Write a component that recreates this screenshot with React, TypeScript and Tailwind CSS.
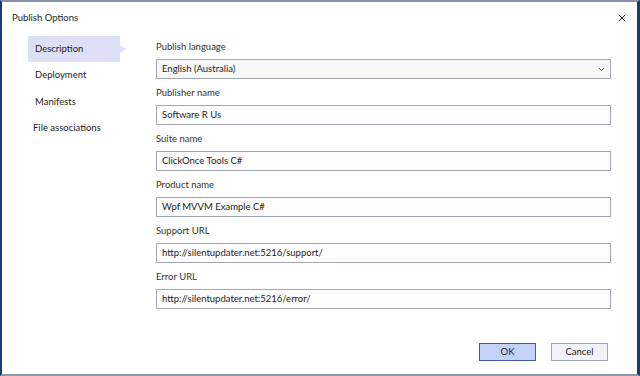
import { ChevronDown, X } from "lucide-react";

// fields shown in the right column
const fields = [
  { label: "Publisher name", value: "Software R Us" },
  { label: "Suite name", value: "ClickOnce Tools C#" },
  { label: "Product name", value: "Wpf MVVM Example C#" },
  { label: "Support URL", value: "http://silentupdater.net:5216/support/" },
  { label: "Error URL", value: "http://silentupdater.net:5216/error/" },
];

const navItems = ["Deployment", "Manifests"];

export default function App() {
  return (
    <div
      className="w-[640px] h-[376px] bg-white border-t-2 border-t-[#8690ad] border-l-2 border-l-[#1f3a70] border-r-[3px] border-r-[#1f3a70] border-b-2 border-b-[#8f97aa] flex flex-col text-[9.5px] text-[#1e1e1e] overflow-hidden"
      style={{ fontFamily: 'Lato, "Open Sans", sans-serif' }}
    >
      {/* title bar */}
      <div className="h-[32px] flex items-center justify-between pl-[10px] pr-[9px] shrink-0">
        <span className="text-[#1e1e1e]">Publish Options</span>
        <X size={12} strokeWidth={2} className="text-[#222]" />
      </div>

      <div className="flex flex-1">
        {/* sidebar */}
        <nav className="w-[154px] pl-[26px] pt-[2px] shrink-0 flex flex-col">
          <div className="relative w-[92px] h-[26px] bg-[#dde0f7] flex items-center pl-[7px]">
            Description
            <span className="absolute right-[-6px] top-[9px] w-0 h-0 border-y-[4px] border-y-transparent border-l-[6px] border-l-[#dde0f7]" />
          </div>
          {navItems.map((item) => (
            <div key={item} className="h-[27px] flex items-center pl-[7px]">
              {item}
            </div>
          ))}
          <div className="h-[25px] flex items-center pl-[5px]">File associations</div>
        </nav>

        {/* form */}
        <div className="w-[455px] pt-[6px] flex flex-col">
          <div className="flex flex-col">
            <label className="h-[14px] flex items-center text-[#333]">Publish language</label>
            <div className="mt-[5px] h-[20px] border border-[#a3a7b0] bg-[#f7f7f8] flex items-center justify-between pl-[5px] pr-[4px]">
              <span>English (Australia)</span>
              <ChevronDown size={9} strokeWidth={2.5} className="text-[#444]" />
            </div>
          </div>
          {fields.map((f) => (
            <div key={f.label} className="flex flex-col mt-[7px]">
              <label className="h-[14px] flex items-center text-[#333]">{f.label}</label>
              <div className="mt-[5px] h-[20px] border border-[#a3a7b0] bg-[#fcfcfc] flex items-center pl-[5px]">
                {f.value}
              </div>
            </div>
          ))}

          <div className="flex justify-end gap-[15px] mt-[34px] pr-[3px]">
            <button className="w-[57px] h-[18px] border border-[#3b5aa8] bg-[#c4d2f8] leading-none">
              OK
            </button>
            <button className="w-[57px] h-[18px] border border-[#a4a8b3] bg-[#f2f3f8] leading-none">
              Cancel
            </button>
          </div>
        </div>
      </div>
    </div>
  );
}
